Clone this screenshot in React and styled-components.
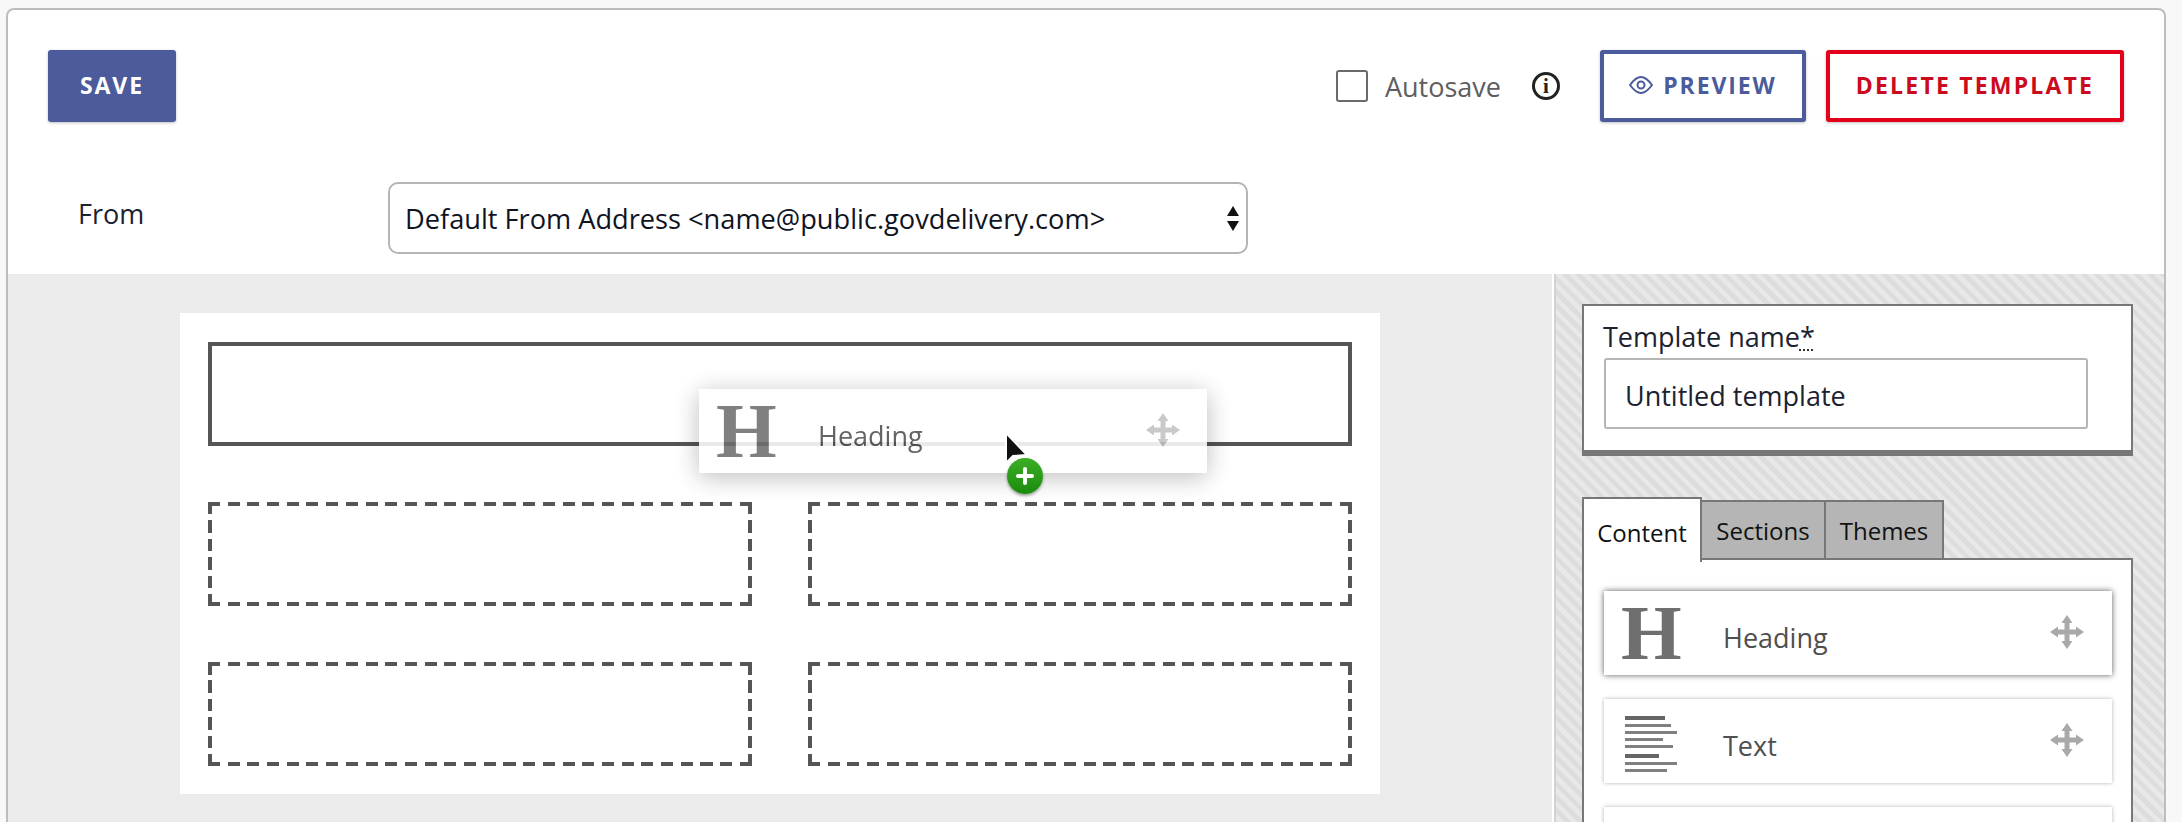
import React from "react"
import styled, { createGlobalStyle } from "styled-components"

const GlobalStyle = createGlobalStyle`
  html, body {
    margin: 0;
    height: 822px;
    overflow: hidden;
    background: #f8f8f8;
  }
  * {
    box-sizing: border-box;
  }
`;

const Page = styled.div`
  padding: 8px 16px 0 6px;
  height: 822px;
  overflow: hidden;
  font-family: "Open Sans", "Liberation Sans", sans-serif;
  color: #1c2230;
`;

const Card = styled.div`
  position: relative;
  background: #fff;
  border: 2px solid #bdbdbd;
  border-bottom: none;
  border-radius: 8px 8px 0 0;
  overflow: hidden;
`;

const Toolbar = styled.div`
  display: flex;
  align-items: center;
  padding: 40px 40px 0 40px;
  height: 112px;
`;

const Spacer = styled.div`
  flex: 1;
`;

const Button = styled.button`
  height: 72px;
  padding: 0 0 2px;
  width: ${props => props.$width}px;
  margin-left: ${props => props.$gap || 0}px;
  display: flex;
  align-items: center;
  justify-content: center;
  gap: 10px;
  border: 4px solid ${props => props.$color};
  border-radius: 3px;
  background: ${props => props.$solid ? props.$color : "#fff"};
  color: ${props => props.$text || (props.$solid ? "#fff" : props.$color)};
  font-family: inherit;
  font-weight: 700;
  font-size: 23px;
  letter-spacing: ${props => props.$spacing || 1.9}px;
  box-shadow: 0 1px 3px rgba(0, 0, 0, 0.25);
`;

const CheckBox = styled.span`
  width: 32px;
  height: 32px;
  border: 2px solid #6a6a6a;
  border-radius: 3px;
  background: #fff;
`;

const CheckLabel = styled.span`
  margin-left: 17px;
  font-size: 27px;
  color: #5e5e5e;
`;

const InfoIcon = styled.span`
  width: 28px;
  height: 28px;
  margin: 0 40px 0 31px;
  border: 3px solid #222;
  border-radius: 50%;
  display: grid;
  place-items: center;
  font-family: "Liberation Serif", serif;
  font-weight: 700;
  font-size: 21px;
  line-height: 1;
  color: #222;
`;

const FromRow = styled.div`
  display: flex;
  align-items: center;
  height: 152px;
  padding: 40px 0 0 70px;
`;

const FromLabel = styled.span`
  width: 310px;
  margin-top: -10px;
  font-size: 27px;
`;

const SelectBox = styled.div`
  width: 860px;
  height: 72px;
  padding: 0 7px 0 15px;
  display: flex;
  align-items: center;
  justify-content: space-between;
  border: 2px solid #b5b5b5;
  border-radius: 10px;
  font-size: 27.2px;
  color: #10141f;
`;

const SelectArrows = styled.span`
  display: flex;
  flex-direction: column;
  gap: 5px;
`;

const Arrow = styled.span`
  width: 0;
  height: 0;
  border-left: 6.5px solid transparent;
  border-right: 6.5px solid transparent;
  border-top: ${props => props.$down ? "10px solid #111" : "none"};
  border-bottom: ${props => props.$down ? "none" : "10px solid #111"};
`;

const Workspace = styled.div`
  display: grid;
  grid-template-columns: 1544px 1fr;
  height: 560px;
`;

const Stage = styled.div`
  background: #ebebeb;
  padding: 39px 0 0 172px;
`;

const Canvas = styled.div`
  width: 1200px;
  height: 481px;
  padding: 29px 28px;
  background: #fff;
  display: grid;
  grid-template-columns: 1fr 1fr;
  grid-auto-rows: 104px;
  gap: 56px;
`;

const SolidZone = styled.div`
  grid-column: 1 / 3;
  border: 4px solid #555;
`;

// the dash rhythm of the original is longer than what border: dashed gives
const DashedZone = styled.div`
  background-image:
    repeating-linear-gradient(90deg, #555 0 12px, transparent 12px 19.7px),
    repeating-linear-gradient(90deg, #555 0 12px, transparent 12px 19.7px),
    repeating-linear-gradient(180deg, #555 0 12.5px, transparent 12.5px 18.4px),
    repeating-linear-gradient(180deg, #555 0 12.5px, transparent 12.5px 18.4px);
  background-size: 100% 4px, 100% 4px, 4px 100%, 4px 100%;
  background-position: top left, bottom left, top left, top right;
  background-repeat: no-repeat;
`;

const Sidebar = styled.div`
  border-left: 2px solid #fff;
  padding: 30px 31px 0 28px;
  background: repeating-linear-gradient(45deg, #e8e8e8 0, #e8e8e8 4.7px, #dddddd 4.7px, #dddddd 9.4px);
  box-shadow: inset 2px 0 0 #d2d2d2;
`;

const NamePanel = styled.div`
  height: 152px;
  padding: 13px 20px 0 20px;
  background: #fff;
  border: 2px solid #777;
  border-bottom-width: 6px;
`;

const NameLabel = styled.div`
  margin-left: -1px;
  font-size: 27px;
  line-height: 36px;
`;

const Required = styled.abbr`
  text-decoration: underline dotted #333 2px;
  text-underline-offset: 2px;
`;

const NameInput = styled.div`
  width: 484px;
  height: 71px;
  margin-top: 3px;
  padding: 3px 19px 0;
  display: flex;
  align-items: center;
  border: 2px solid #b5b5b5;
  border-radius: 3px;
  font-size: 27px;
`;

const Tabs = styled.div`
  display: flex;
  align-items: flex-end;
  margin-top: 39px;
  height: 65px;
  position: relative;
  z-index: 1;
`;

const Tab = styled.div`
  height: ${props => props.$active ? 65 : 60}px;
  width: ${props => props.$width}px;
  margin-bottom: ${props => props.$active ? -2 : 0}px;
  margin-left: ${props => props.$active ? 0 : -2}px;
  padding-top: ${props => props.$active ? 3 : 0}px;
  display: grid;
  place-items: center;
  border: 2px solid #777;
  border-bottom: ${props => props.$active ? "none" : "2px solid #777"};
  background: ${props => props.$active ? "#fff" : "#b5b5b5"};
  color: #111;
  font-size: 24px;
`;

const TabPanel = styled.div`
  height: 300px;
  margin-top: -2px;
  padding: 31px 19px 0 20px;
  display: flex;
  flex-direction: column;
  gap: 24px;
  background: #fff;
  border: 2px solid #777;
  border-bottom: none;
`;

const Item = styled.div`
  flex: none;
  height: 84px;
  display: flex;
  align-items: center;
  padding: 0 28px 0 17px;
  background: #fff;
  box-shadow: ${props => props.$raised
    ? "0 0 6px rgba(0, 0, 0, 0.65)"
    : "0 0 4px rgba(0, 0, 0, 0.3)"};
`;

const ItemGlyph = styled.div`
  width: 102px;
  height: 62px;
  flex: none;
`;

const SerifH = styled.div`
  font-family: "Liberation Serif", serif;
  font-weight: 700;
  font-size: 78px;
  line-height: 62px;
  height: 62px;
  color: #6f6f6f;
`;

const ItemName = styled.span`
  flex: 1;
  margin-top: 9px;
  font-size: 27px;
  color: #4f4f4f;
`;

const TextLines = styled.div`
  display: flex;
  flex-direction: column;
  gap: 4px;
  padding: 4px 0 0 4px;
`;

const TextLine = styled.span`
  height: ${props => props.$strong ? 4 : 3}px;
  width: ${props => props.$width}px;
  margin-top: ${props => props.$strong ? 2 : 0}px;
  background: ${props => props.$strong ? "#666" : "#808080"};
`;

const DragGhost = styled(Item)`
  position: absolute;
  left: 691px;
  top: 379px;
  width: 508px;
  padding: 0 27px 0 17px;
  box-shadow: 0 4px 24px rgba(0, 0, 0, 0.3);
  opacity: 0.88;
`;

const Pointer = styled.svg`
  position: absolute;
  left: 996px;
  top: 421px;
  width: 30px;
  height: 44px;
`;

const AddBadge = styled.div`
  position: absolute;
  left: 999px;
  top: 448px;
  width: 36px;
  height: 36px;
  border-radius: 50%;
  background: linear-gradient(#3cae25, #1b8a0d);
  box-shadow: 0 2px 3px rgba(0, 0, 0, 0.35);
  display: grid;
  place-items: center;
`;

const MoveSvg = styled.svg`
  width: 34px;
  height: 34px;
  flex: none;
  margin-top: -2px;
  opacity: ${props => props.$faded ? 0.7 : 1};
  filter: blur(0.5px);
`;

const MoveIcon = ({ faded }) => (
  <MoveSvg viewBox="0 0 34 34" $faded={faded}>
    <path
      d="M17 0l5.500 8H19.500v6.500H26V11.500l8 5.500-8 5.500v-3H19.500V26h3L17 34l-5.500-8h3v-6.500H8v3L0 17l8-5.500v3h6.500V8h-3z"
      fill="#a9a9a9"
    />
  </MoveSvg>
);

const EyeIcon = () => (
  <svg width="24" height="18" viewBox="0 0 24 18" fill="none" stroke="#4c5b9b" strokeWidth="2">
    <path d="M1 9C5 3.500 8.500 1 12 1s7 2.500 11 8c-4 5.500-7.500 8-11 8s-7-2.500-11-8z" strokeLinejoin="round" />
    <circle cx="12" cy="9" r="3.500" />
  </svg>
);

const HeadingGlyph = () => <SerifH>H</SerifH>;

const ParagraphGlyph = () => (
  <TextLines>
    <TextLine $strong $width={40} />
    <TextLine $width={46} />
    <TextLine $width={52} />
    <TextLine $width={38} />
    <TextLine $width={48} />
    <TextLine $strong $width={34} />
    <TextLine $width={52} />
    <TextLine $width={42} />
  </TextLines>
);

export default function App() {
  return (
    <Page>
      <GlobalStyle />
      <Card>
        <Toolbar>
          <Button $solid $color="#4c5b9b" $width={128}>SAVE</Button>
          <Spacer />
          <CheckBox />
          <CheckLabel>Autosave</CheckLabel>
          <InfoIcon>i</InfoIcon>
          <Button $color="#4c5b9b" $width={206}><EyeIcon />PREVIEW</Button>
          <Button $color="#e2001a" $text="#cc0a1e" $width={298} $gap={20} $spacing={2.2}>DELETE TEMPLATE</Button>
        </Toolbar>
        <FromRow>
          <FromLabel>From</FromLabel>
          <SelectBox>
            Default From Address &lt;name@public.govdelivery.com&gt;
            <SelectArrows>
              <Arrow />
              <Arrow $down />
            </SelectArrows>
          </SelectBox>
        </FromRow>
        <Workspace>
          <Stage>
            <Canvas>
              <SolidZone />
              <DashedZone />
              <DashedZone />
              <DashedZone />
              <DashedZone />
            </Canvas>
          </Stage>
          <Sidebar>
            <NamePanel>
              <NameLabel>Template name<Required>*</Required></NameLabel>
              <NameInput>Untitled template</NameInput>
            </NamePanel>
            <Tabs>
              <Tab $active $width={120}>Content</Tab>
              <Tab $width={126}>Sections</Tab>
              <Tab $width={120}>Themes</Tab>
            </Tabs>
            <TabPanel>
              <Item $raised>
                <ItemGlyph><HeadingGlyph /></ItemGlyph>
                <ItemName>Heading</ItemName>
                <MoveIcon />
              </Item>
              <Item>
                <ItemGlyph><ParagraphGlyph /></ItemGlyph>
                <ItemName>Text</ItemName>
                <MoveIcon />
              </Item>
              <Item>
                <ItemGlyph>
                  <TextLines>
                    <TextLine $width={56} />
                  </TextLines>
                </ItemGlyph>
              </Item>
            </TabPanel>
          </Sidebar>
        </Workspace>
        <DragGhost>
          <ItemGlyph><HeadingGlyph /></ItemGlyph>
          <ItemName>Heading</ItemName>
          <MoveIcon faded />
        </DragGhost>
        <Pointer viewBox="0 0 30 44">
          <path d="M2 2v30l7-7 14-1z" fill="#111" stroke="#fff" strokeWidth="2" />
        </Pointer>
        <AddBadge>
          <svg width="20" height="20" viewBox="0 0 20 20">
            <path d="M10 3v14M3 10h14" stroke="#fff" strokeWidth="4" strokeLinecap="round" />
          </svg>
        </AddBadge>
      </Card>
    </Page>
  );
}
